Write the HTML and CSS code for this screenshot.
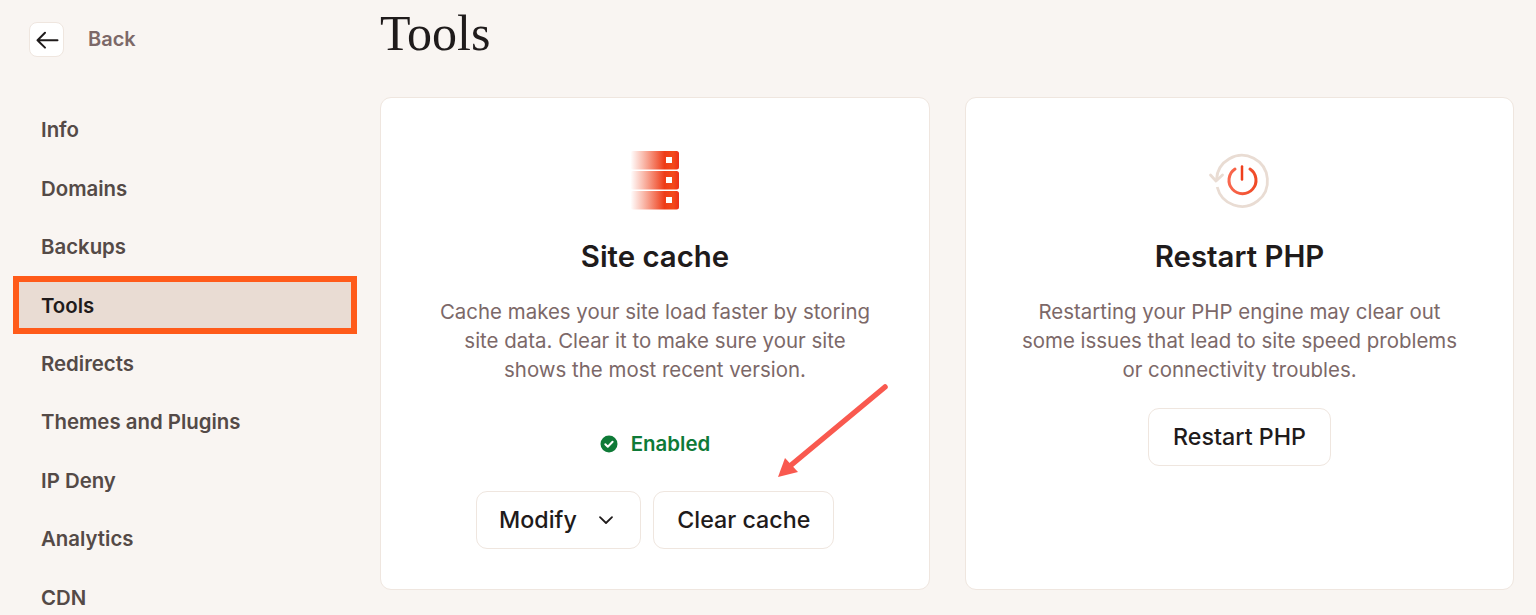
FILE: index.html
```html
<!DOCTYPE html>
<html lang="en">
<head>
<meta charset="utf-8">
<title>Tools</title>
<link rel="stylesheet" href="styles.css">
</head>
<body>
<div class="page">
  <aside class="sidebar">
    <div class="back">
      <button class="back-btn" aria-label="Back">
        <svg width="24" height="24" viewBox="0 0 24 24" fill="none" stroke="#1f1b1b" stroke-width="2" stroke-linecap="round" stroke-linejoin="round"><path d="M22.500 12.200H2.500M10 4.800l-7.500 7.400 7.500 7.400"/></svg>
      </button>
      <span class="back-label">Back</span>
    </div>
    <nav class="nav">
      <a class="nav-item">Info</a>
      <a class="nav-item">Domains</a>
      <a class="nav-item">Backups</a>
      <a class="nav-item active">Tools</a>
      <a class="nav-item">Redirects</a>
      <a class="nav-item">Themes and Plugins</a>
      <a class="nav-item">IP Deny</a>
      <a class="nav-item">Analytics</a>
      <a class="nav-item">CDN</a>
    </nav>
  </aside>
  <main class="main">
    <h1 class="title">Tools</h1>
    <div class="cards">
      <section class="card">
        <svg class="card-icon" width="50" height="60" viewBox="0 2 50 60">
          <defs>
            <linearGradient id="srv" x1="0" y1="0" x2="1" y2="0">
              <stop offset="0" stop-color="#f0401c" stop-opacity="0"/>
              <stop offset="0.25" stop-color="#f0451f" stop-opacity="0.35"/>
              <stop offset="0.7" stop-color="#ee3c18"/>
              <stop offset="0.88" stop-color="#f3491a"/>
              <stop offset="1" stop-color="#ec2f1a"/>
            </linearGradient>
          </defs>
          <rect x="0.500" y="11" width="48.500" height="18.500" rx="2.500" fill="url(#srv)"/>
          <rect x="0.500" y="31" width="48.500" height="18.500" rx="2.500" fill="url(#srv)"/>
          <rect x="0.500" y="51" width="48.500" height="18.500" rx="2.500" fill="url(#srv)"/>
          <rect x="36" y="17" width="6" height="6" fill="#fff"/>
          <rect x="36" y="37" width="6" height="6" fill="#fff"/>
          <rect x="36" y="57" width="6" height="6" fill="#fff"/>
        </svg>
        <h2 class="card-title">Site cache</h2>
        <p class="card-text">Cache makes your site load faster by storing site data. Clear it to make sure your site shows the most recent version.</p>
        <div class="status">
          <svg width="18" height="18" viewBox="0 0 18 18"><circle cx="9" cy="9" r="8.500" fill="#0e7a37"/><path d="M5.300 9.300l2.500 2.500 4.800-5" fill="none" stroke="#fff" stroke-width="2" stroke-linecap="round" stroke-linejoin="round"/></svg>
          <span>Enabled</span>
        </div>
        <div class="actions">
          <button class="btn btn-modify">Modify
            <svg width="16" height="16" viewBox="0 0 16 16" fill="none" stroke="#1f1b1b" stroke-width="1.800" stroke-linecap="round" stroke-linejoin="round"><path d="M2 5.200L8 11l6-5.800"/></svg>
          </button>
          <button class="btn">Clear cache</button>
        </div>
      </section>
      <section class="card">
        <svg class="card-icon" width="60" height="60" viewBox="-1.500 -7.500 60 60">
          <defs>
            <linearGradient id="pwr" x1="0" y1="0" x2="1" y2="0">
              <stop offset="0" stop-color="#f9684f"/>
              <stop offset="1" stop-color="#f04a26"/>
            </linearGradient>
          </defs>
          <path d="M5 30A25.500 25.500 0 1 1 5.700 37.500" fill="none" stroke="#e9dcd3" stroke-width="2.800"/>
          <path d="M-1 25.500l5.500 6 6.500-6" fill="none" stroke="#e9dcd3" stroke-width="2.800" stroke-linecap="round" stroke-linejoin="round"/>
          <path d="M23.500 19.500A13.500 13.500 0 1 0 38.500 19.500" fill="none" stroke="url(#pwr)" stroke-width="3" stroke-linecap="round"/>
          <path d="M30.500 17v13" fill="none" stroke="#ef3f1c" stroke-width="2.500" stroke-linecap="round"/>
        </svg>
        <h2 class="card-title">Restart PHP</h2>
        <p class="card-text">Restarting your PHP engine may clear out some issues that lead to site speed problems or connectivity troubles.</p>
        <div class="actions actions-php">
          <button class="btn btn-wide">Restart PHP</button>
        </div>
      </section>
    </div>
  </main>
</div>
<svg class="arrow" width="120" height="100" viewBox="0 0 120 100" fill="none">
  <path d="M109 6L14 85" stroke="#f9594f" stroke-width="5.500" stroke-linecap="round"/>
  <path d="M2 96L9 77l13 14z" fill="#f9594f"/>
</svg>
</body>
</html>
```
FILE: styles.css
```css
* { box-sizing: border-box; }
html, body { margin: 0; height: 615px; overflow: hidden; }
body {
  position: relative;
  background: #f9f5f2;
  font-family: Inter, "Liberation Sans", sans-serif;
  color: #1f1b1b;
}
.page { display: flex; height: 615px; }
.sidebar { width: 380px; flex: none; padding: 22px 23px 0 13px; }
.back { display: flex; align-items: center; gap: 24px; padding-left: 16px; height: 35px; }
.back-btn {
  width: 35px; height: 35px; padding: 0;
  display: flex; align-items: center; justify-content: center;
  background: #fff; border: 1px solid #efe6df; border-radius: 8px;
}
.back-label { font-size: 20px; font-weight: 600; color: #7c6868; padding-bottom: 2px; }
.nav { display: flex; flex-direction: column; margin-top: 43.700px; }
.nav-item {
  height: 58.400px;
  display: flex; align-items: center;
  padding-left: 28px;
  font-size: 20.400px; font-weight: 600; color: #544a47;
}
.nav-item.active {
  background: #e9dcd3;
  color: #1f1b1b;
  border: 6px solid #ff5b1a;
  padding-left: 22px;
}
.main { flex: none; width: 1134px; padding-right: 1px; }
.title {
  margin: 0; height: 97px;
  font-family: "Liberation Serif", serif;
  font-size: 50px; font-weight: 400; line-height: 66px;
  color: #1f1b1b;
}
.cards { display: grid; grid-template-columns: 550px 549px; gap: 35px; }
.card {
  height: 493px;
  display: flex; flex-direction: column; align-items: center;
  background: #fff;
  border: 1px solid #efe6df; border-radius: 11px;
  padding-top: 44px;
}
.card-icon { display: block; overflow: visible; height: 60px; }
.card-title {
  margin: 35px 0 0;
  font-size: 29.400px; font-weight: 600; line-height: 40px;
  color: #1f1b1b;
}
.card-text {
  margin: 20px 0 0;
  width: 440px;
  text-align: center;
  font-size: 20.450px; font-weight: 400; line-height: 29.200px;
  color: #7c6868;
}
.status {
  display: flex; align-items: center; gap: 13px;
  margin-top: 44px; height: 30px;
  font-size: 20.450px; font-weight: 600; color: #0e7a37;
}
.actions { display: flex; gap: 12px; margin-top: 32px; }
.actions-php { margin-top: 23px; }
.btn {
  height: 58px;
  display: flex; align-items: center; justify-content: center;
  padding: 0 23px;
  background: #fff;
  border: 1px solid #efe6df; border-radius: 11px;
  font-family: inherit; font-size: 23.250px; font-weight: 500; color: #1f1b1b;
}
.btn-modify { gap: 21px; padding-left: 22.500px; padding-right: 26.500px; }
.btn-wide { padding: 0 24.500px; }
.arrow { position: absolute; left: 776px; top: 381px; }
```
